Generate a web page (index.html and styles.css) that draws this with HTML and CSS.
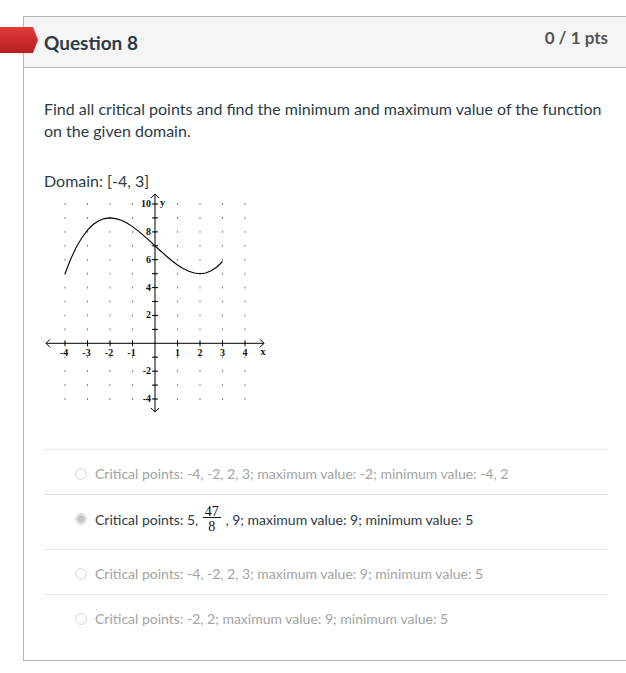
FILE: index.html
```html
<!DOCTYPE html>
<html lang="en">
<head>
<meta charset="utf-8">
<title>Question 8</title>
<link rel="stylesheet" href="styles.css">
</head>
<body>
<div class="page">
  <div class="flag"></div>
  <div class="card">
    <div class="card-header">
      <h2 class="title">Question 8</h2>
      <span class="pts">0 / 1 pts</span>
    </div>
    <div class="card-body">
      <p class="text">Find all critical points and find the minimum and maximum value of the function on the given domain.</p>
      <p class="text domain">Domain: [-4, 3]</p>
      <svg class="graph" width="228" height="224" viewBox="44 192 228 224" xmlns="http://www.w3.org/2000/svg">
        <defs>
          <pattern id="dots" patternUnits="userSpaceOnUse" x="53.75" y="197.03" width="22.5" height="13.93">
            <circle cx="11.25" cy="6.965" r="0.65" fill="#444"/>
          </pattern>
        </defs>
        <rect x="54" y="197" width="202" height="209" fill="url(#dots)"/>
        <g stroke="#000" stroke-width="1" fill="none">
          <line x1="46" y1="343.3" x2="264" y2="343.3"/>
          <polyline points="50,339.3 46,343.3 50,347.3"/>
          <polyline points="260,339.3 264,343.3 260,347.3"/>
          <line x1="155" y1="194" x2="155" y2="412"/>
          <polyline points="151,198 155,194 159,198"/>
          <polyline points="151,408 155,412 159,408"/>
          <path d="M65 340.3v6M87.5 340.3v6M110 340.3v6M132.5 340.3v6M177.5 340.3v6M200 340.3v6M222.5 340.3v6M245 340.3v6"/>
          <path d="M152 204h6M152 217.9h6M152 231.9h6M152 245.8h6M152 259.7h6M152 273.7h6M152 287.6h6M152 301.5h6M152 315.4h6M152 329.4h6M152 357.2h6M152 371.2h6M152 385.1h6M152 399h6"/>
          <polyline stroke-width="1.1" points="65,273.7 70.6,259.3 76.25,247.3 81.9,237.7 87.5,230.1 93.1,224.5 98.75,220.8 104.4,218.6 110,217.9 115.6,218.6 121.25,220.3 126.9,223.1 132.5,226.6 138.1,230.9 143.75,235.6 149.4,240.6 155,245.8 160.6,251 166.25,256 171.9,260.7 177.5,265 183.1,268.5 188.75,271.3 194.4,273 200,273.7 205.6,273 211.25,270.8 216.9,267 222.5,261.5"/>
        </g>
        <g class="lbl">
          <text x="64" y="356" text-anchor="middle">-4</text>
          <text x="86.5" y="356" text-anchor="middle">-3</text>
          <text x="109" y="356" text-anchor="middle">-2</text>
          <text x="131.5" y="356" text-anchor="middle">-1</text>
          <text x="177.5" y="356" text-anchor="middle">1</text>
          <text x="200" y="356" text-anchor="middle">2</text>
          <text x="222.5" y="356" text-anchor="middle">3</text>
          <text x="245" y="356" text-anchor="middle">4</text>
          <text x="263" y="355" text-anchor="middle">x</text>
          <text x="151" y="207" text-anchor="end">10</text>
          <text x="151" y="234.9" text-anchor="end">8</text>
          <text x="151" y="262.7" text-anchor="end">6</text>
          <text x="151" y="290.6" text-anchor="end">4</text>
          <text x="151" y="318.4" text-anchor="end">2</text>
          <text x="151" y="374.2" text-anchor="end">-2</text>
          <text x="151" y="402" text-anchor="end">-4</text>
          <text x="160" y="206">y</text>
        </g>
      </svg>
      <div class="answers">
        <div class="answer">
          <span class="radio"></span>
          <span class="label">Critical points: -4, -2, 2, 3; maximum value: -2; minimum value: -4, 2</span>
        </div>
        <div class="answer answer-tall selected">
          <span class="radio"></span>
          <span class="label">Critical points: 5, <span class="frac"><span class="num">47</span><span class="den">8</span></span> , 9; maximum value: 9; minimum value: 5</span>
        </div>
        <div class="answer">
          <span class="radio"></span>
          <span class="label">Critical points: -4, -2, 2, 3; maximum value: 9; minimum value: 5</span>
        </div>
        <div class="answer">
          <span class="radio"></span>
          <span class="label">Critical points: -2, 2; maximum value: 9; minimum value: 5</span>
        </div>
      </div>
    </div>
  </div>
</div>
</body>
</html>
```
FILE: styles.css
```css
html {
  overflow: hidden;
}
body {
  margin: 0;
  background: #fff;
  font-family: Lato, "Liberation Sans", sans-serif;
  color: #2d3b45;
}
.page {
  position: relative;
  padding-top: 16px;
  padding-left: 23px;
}
.flag {
  position: absolute;
  left: 0;
  top: 27px;
  width: 38px;
  height: 26px;
  background: linear-gradient(#e13a39, #b71e1e);
  clip-path: polygon(0 0, 33px 0, 38px 13px, 33px 26px, 0 26px);
  z-index: 2;
}
.card {
  box-sizing: border-box;
  width: 606px;
  border: 1px solid #b5b5b5;
  background: #fff;
}
.card-header {
  display: flex;
  justify-content: space-between;
  height: 50px;
  padding: 0 20px;
  background: #f5f5f5;
  border-bottom: 1px solid #b5b5b5;
}
.title {
  margin: 0;
  align-self: center;
  font-size: 19px;
  font-weight: 700;
  color: #2d3b45;
}
.pts {
  margin-top: 10px;
  font-size: 17px;
  font-weight: 700;
  color: #555;
}
.card-body {
  padding: 30px 20px 21px;
}
.text {
  margin: 0;
  font-size: 16px;
  line-height: 22px;
}
.domain {
  margin-top: 28px;
}
.graph {
  display: block;
}
.lbl text {
  font-family: "Liberation Serif", serif;
  font-size: 10px;
  font-weight: 700;
  fill: #111;
}
.answers {
  margin-top: 33px;
}
.answer {
  display: flex;
  align-items: center;
  padding: 14px 0 10px 31px;
  border-top: 1px solid #e6e6e6;
  font-size: 14px;
  line-height: 20px;
  color: #a3a3a3;
}
.answer-tall {
  padding-top: 11px;
  padding-bottom: 17px;
  border-top-color: #dcdcdc;
}
.radio {
  box-sizing: border-box;
  flex: none;
  width: 12px;
  height: 12px;
  margin-right: 8px;
  border: 1px solid #dadada;
  border-radius: 50%;
  background: #fdfdfd;
}
.selected {
  color: #2d3b45;
}
.selected .radio {
  border-color: #d6d6d6;
  background: radial-gradient(circle, #c4c4c4 0 3.5px, #ececec 4px);
}
.frac {
  display: inline-flex;
  flex-direction: column;
  align-items: center;
  vertical-align: 9px;
  margin: 0 1px;
  font-family: "Liberation Serif", serif;
  font-size: 14px;
  color: #111;
}
.num {
  line-height: 11px;
  padding: 0 2px;
  border-bottom: 1px solid #111;
}
.den {
  line-height: 11px;
  padding-top: 3px;
}
```
